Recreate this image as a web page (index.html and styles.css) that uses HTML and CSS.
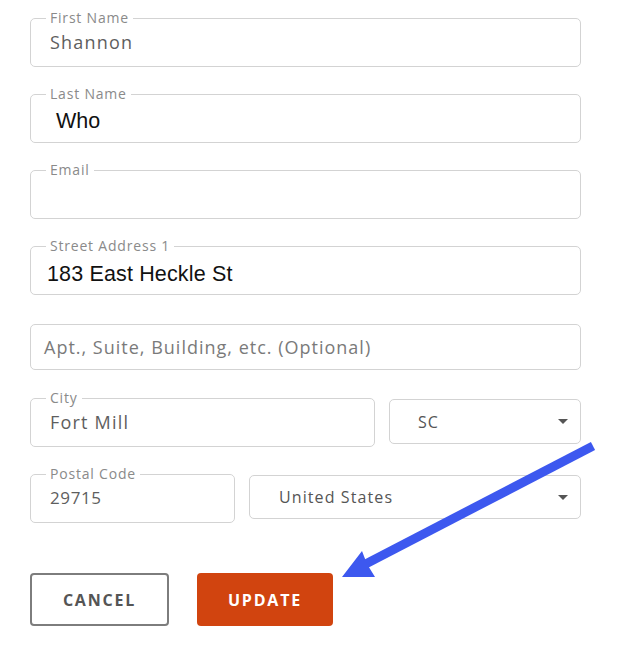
FILE: index.html
```html
<!DOCTYPE html>
<html>
<head>
<meta charset="utf-8">
<link rel="stylesheet" href="styles.css">
</head>
<body>
<form class="form">
  <fieldset class="field">
    <legend class="label">First Name</legend>
    <div class="value">Shannon</div>
  </fieldset>
  <fieldset class="field">
    <legend class="label">Last Name</legend>
    <div class="value value-arial value-who">Who</div>
  </fieldset>
  <fieldset class="field">
    <legend class="label">Email</legend>
    <div class="value"></div>
  </fieldset>
  <fieldset class="field">
    <legend class="label">Street Address 1</legend>
    <div class="value value-arial value-street">183 East Heckle St</div>
  </fieldset>
  <div class="plain-field">
    <div class="placeholder">Apt., Suite, Building, etc. (Optional)</div>
  </div>
  <div class="row row-city">
    <fieldset class="field">
      <legend class="label">City</legend>
      <div class="value">Fort Mill</div>
    </fieldset>
    <div class="select">
      <span class="select-text">SC</span>
      <span class="caret"></span>
    </div>
  </div>
  <div class="row row-postal">
    <fieldset class="field">
      <legend class="label">Postal Code</legend>
      <div class="value value-small">29715</div>
    </fieldset>
    <div class="select select-country">
      <span class="select-text">United States</span>
      <span class="caret"></span>
    </div>
  </div>
  <div class="actions">
    <button type="button" class="btn btn-cancel">CANCEL</button>
    <button type="button" class="btn btn-update">UPDATE</button>
  </div>
</form>
<svg class="pointer" width="633" height="648" viewBox="0 0 633 648">
  <line x1="593" y1="446" x2="356" y2="569" stroke="#3d58ef" stroke-width="9" stroke-linecap="butt"/>
  <polygon points="342,577 362,551 367,564 375,577" fill="#3d58ef"/>
</svg>
</body>
</html>
```
FILE: styles.css
```css
html, body {
  margin: 0;
  padding: 0;
  background: #ffffff;
}
body {
  width: 633px;
  height: 648px;
  position: relative;
  overflow: hidden;
  font-family: "Open Sans", "Noto Sans", sans-serif;
}
.form {
  display: flex;
  flex-direction: column;
  gap: 19px;
  width: 551px;
  padding: 10px 0 0 30px;
}
.field {
  margin: 0;
  min-width: 0;
  border: 1px solid #d3d3d3;
  border-radius: 5px;
  padding: 2px 15px 10px 19px;
  box-sizing: border-box;
  height: 57px;
}
.label {
  font-size: 14px;
  line-height: 16px;
  color: #8a8a8a;
  letter-spacing: 0.8px;
  padding: 0 4px;
  margin-left: -4px;
}
.value {
  font-size: 18px;
  line-height: 28px;
  height: 28px;
  color: #5e5e5e;
  letter-spacing: 1.2px;
}
.value-small {
  font-size: 17px;
  letter-spacing: 0.6px;
}
.value-arial {
  font-family: "Liberation Sans", Arial, sans-serif;
  font-size: 21.5px;
  color: #111111;
  letter-spacing: 0;
  padding-top: 3px;
}
.value-who {
  padding-left: 6px;
}
.value-street {
  margin-left: -3px;
  padding-top: 4px;
  letter-spacing: 0.15px;
}
.plain-field {
  margin-top: 10px;
  height: 46px;
  border: 1px solid #d3d3d3;
  border-radius: 5px;
  box-sizing: border-box;
  display: flex;
  align-items: center;
  padding-left: 13px;
}
.placeholder {
  font-size: 18px;
  color: #7a7a7a;
  letter-spacing: 1px;
}
.row {
  display: grid;
  gap: 14px;
  align-items: start;
}
.row-city {
  grid-template-columns: 345px 192px;
  margin-top: 1px;
}
.row-postal {
  grid-template-columns: 205px 332px;
}
.select {
  margin-top: 9px;
  height: 45px;
  border: 1px solid #d3d3d3;
  border-radius: 5px;
  box-sizing: border-box;
  display: flex;
  align-items: center;
  justify-content: space-between;
  padding: 0 12px 0 28px;
}
.select-country {
  height: 44px;
  padding-left: 29px;
}
.select-text {
  font-size: 16px;
  color: #555555;
  letter-spacing: 1.1px;
}
.caret {
  width: 0;
  height: 0;
  border-left: 5px solid transparent;
  border-right: 5px solid transparent;
  border-top: 5px solid #555555;
}
.actions {
  display: flex;
  gap: 28px;
  margin-top: 31px;
}
.btn {
  height: 53px;
  border-radius: 4px;
  font-family: "Open Sans", "Noto Sans", sans-serif;
  font-weight: 700;
  font-size: 16px;
  letter-spacing: 1.8px;
  cursor: pointer;
}
.btn-cancel {
  width: 139px;
  background: #ffffff;
  border: 2px solid #7d7d7d;
  color: #555555;
}
.btn-update {
  width: 136px;
  background: #d1440f;
  border: none;
  color: #ffffff;
}
.pointer {
  position: absolute;
  left: 0;
  top: 0;
  pointer-events: none;
}
```
